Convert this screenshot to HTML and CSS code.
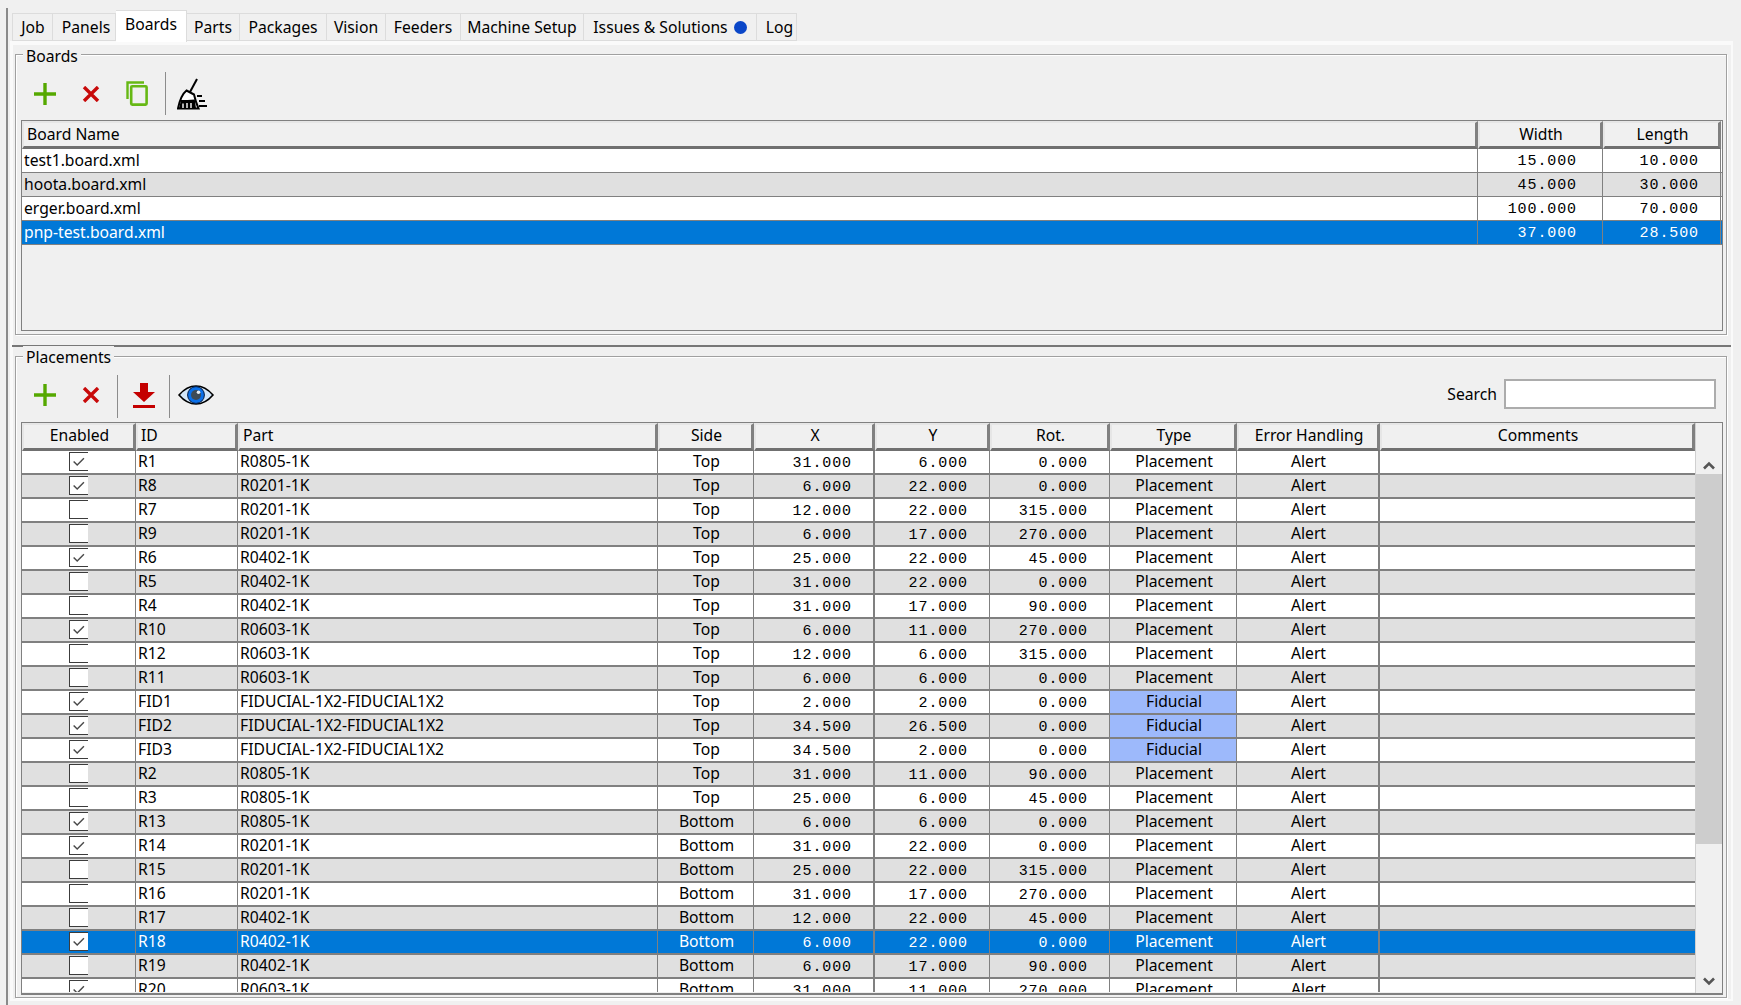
FILE: index.html
```html
<!DOCTYPE html>
<html lang="en">
<head>
<meta charset="utf-8">
<title>OpenPnP Boards</title>
<link rel="stylesheet" href="styles.css">
</head>
<body>
<svg class="defs" width="0" height="0" aria-hidden="true">
  <symbol id="chk" viewBox="0 0 19 19"><path d="M3.5 9.5 L7.5 13.5 L15 6" fill="none" stroke="#4a4a4a" stroke-width="1.6"/></symbol>
  <symbol id="plus" viewBox="0 0 22 22"><path d="M11 0V22M0 11H22" fill="none" stroke="#55a800" stroke-width="3.4"/></symbol>
  <symbol id="cross" viewBox="0 0 18 16"><path d="M2 1L16 15M16 1L2 15" fill="none" stroke="#c80a0a" stroke-width="3.4"/></symbol>
</svg>
<div class="frame">
  <nav class="tabs">
    <div class="tab">Job</div>
    <div class="tab">Panels</div>
    <div class="tab active">Boards</div>
    <div class="tab">Parts</div>
    <div class="tab">Packages</div>
    <div class="tab">Vision</div>
    <div class="tab">Feeders</div>
    <div class="tab">Machine Setup</div>
    <div class="tab">Issues &amp; Solutions <span class="dot"></span></div>
    <div class="tab">Log</div>
  </nav>
  <main class="pane">
    <section class="group group-boards">
      <div class="legend">Boards</div>
      <div class="toolbar">
        <div class="tool"><svg class="i-plus"><use href="#plus"/></svg></div>
        <div class="tool"><svg class="i-cross"><use href="#cross"/></svg></div>
        <div class="tool">
          <svg class="i-copy" viewBox="0 0 22 25"><path d="M1.5 18V1.5H18" fill="none" stroke="#66b814" stroke-width="2.4"/><rect x="5.2" y="5.2" width="15.4" height="18.4" rx="1" fill="none" stroke="#66b814" stroke-width="2.6"/></svg>
        </div>
        <div class="sep sep-copy"></div>
        <div class="tool tool-broom">
          <svg class="i-broom" viewBox="0 0 30 32"><path d="M20 1L13 14" fill="none" stroke="#000" stroke-width="2"/><path d="M9.5 12.5L17 16.5C18 21 20 27 21.5 30.5H1C2.5 23 4.5 16.5 9.5 12.5Z" fill="#fff" stroke="#000" stroke-width="2"/><path d="M4 22C8 22 13 22 17.8 21.5L19 30.5H2Z" fill="#000"/><path d="M6 30V25.5M10 30V25M14 30V25" stroke="#fff" stroke-width="1.4"/><path d="M20 18H25M22 23H28M22 28H30" stroke="#000" stroke-width="2"/></svg>
        </div>
      </div>
      <div class="table board-table">
        <div class="row head">
          <div class="cell start">Board Name</div><div class="cell center">Width</div><div class="cell center">Length</div>
        </div>
        <div class="row"><div class="cell">test1.board.xml</div><div class="cell num">15.000</div><div class="cell num">10.000</div></div>
        <div class="row alt"><div class="cell">hoota.board.xml</div><div class="cell num">45.000</div><div class="cell num">30.000</div></div>
        <div class="row"><div class="cell">erger.board.xml</div><div class="cell num">100.000</div><div class="cell num">70.000</div></div>
        <div class="row sel"><div class="cell">pnp-test.board.xml</div><div class="cell num">37.000</div><div class="cell num">28.500</div></div>
      </div>
    </section>
    <div class="splitter"></div>
    <section class="group group-placements">
      <div class="legend">Placements</div>
      <div class="toolbar toolbar-pl">
        <div class="tool"><svg class="i-plus"><use href="#plus"/></svg></div>
        <div class="tool"><svg class="i-cross"><use href="#cross"/></svg></div>
        <div class="sep sep-cross"></div>
        <div class="tool tool-dl">
          <svg class="i-dl" viewBox="0 0 22 25"><path d="M7 0H15V9H22L11 19L0 9H7Z" fill="#c40000"/><rect y="22" width="22" height="3" fill="#c40000"/></svg>
        </div>
        <div class="sep"></div>
        <div class="tool tool-eye">
          <svg class="i-eye" viewBox="0 0 36 20"><path d="M1 10C7 3 12 1 18 1C24 1 29 3 35 10C29 17 24 19 18 19C12 19 7 17 1 10Z" fill="#d3e6f8" stroke="#000" stroke-width="1.6"/><circle cx="18" cy="10" r="8.4" fill="#0a6fe8" stroke="#041a40" stroke-width="1"/><circle cx="18" cy="10" r="5" fill="#3e4b57"/><circle cx="20.5" cy="7.2" r="1.8" fill="#e8eef4"/></svg>
        </div>
        <label class="search">Search <input class="search-box" type="text"></label>
      </div>
      <div class="table pl-table">
        <div class="pl-main">
          <div class="row head">
            <div class="cell center">Enabled</div><div class="cell start">ID</div><div class="cell start">Part</div><div class="cell center">Side</div><div class="cell center">X</div><div class="cell center">Y</div><div class="cell center">Rot.</div><div class="cell center">Type</div><div class="cell center">Error Handling</div><div class="cell center">Comments</div>
          </div>
          <div class="pl-rows">
            <div class="row"><div class="cell chk"><span class="cb"><svg><use href="#chk"/></svg></span></div><div class="cell">R1</div><div class="cell">R0805-1K</div><div class="cell center">Top</div><div class="cell num">31.000</div><div class="cell num">6.000</div><div class="cell num">0.000</div><div class="cell center">Placement</div><div class="cell center">Alert</div><div class="cell"></div></div>
            <div class="row alt"><div class="cell chk"><span class="cb"><svg><use href="#chk"/></svg></span></div><div class="cell">R8</div><div class="cell">R0201-1K</div><div class="cell center">Top</div><div class="cell num">6.000</div><div class="cell num">22.000</div><div class="cell num">0.000</div><div class="cell center">Placement</div><div class="cell center">Alert</div><div class="cell"></div></div>
            <div class="row"><div class="cell chk"><span class="cb"></span></div><div class="cell">R7</div><div class="cell">R0201-1K</div><div class="cell center">Top</div><div class="cell num">12.000</div><div class="cell num">22.000</div><div class="cell num">315.000</div><div class="cell center">Placement</div><div class="cell center">Alert</div><div class="cell"></div></div>
            <div class="row alt"><div class="cell chk"><span class="cb"></span></div><div class="cell">R9</div><div class="cell">R0201-1K</div><div class="cell center">Top</div><div class="cell num">6.000</div><div class="cell num">17.000</div><div class="cell num">270.000</div><div class="cell center">Placement</div><div class="cell center">Alert</div><div class="cell"></div></div>
            <div class="row"><div class="cell chk"><span class="cb"><svg><use href="#chk"/></svg></span></div><div class="cell">R6</div><div class="cell">R0402-1K</div><div class="cell center">Top</div><div class="cell num">25.000</div><div class="cell num">22.000</div><div class="cell num">45.000</div><div class="cell center">Placement</div><div class="cell center">Alert</div><div class="cell"></div></div>
            <div class="row alt"><div class="cell chk"><span class="cb"></span></div><div class="cell">R5</div><div class="cell">R0402-1K</div><div class="cell center">Top</div><div class="cell num">31.000</div><div class="cell num">22.000</div><div class="cell num">0.000</div><div class="cell center">Placement</div><div class="cell center">Alert</div><div class="cell"></div></div>
            <div class="row"><div class="cell chk"><span class="cb"></span></div><div class="cell">R4</div><div class="cell">R0402-1K</div><div class="cell center">Top</div><div class="cell num">31.000</div><div class="cell num">17.000</div><div class="cell num">90.000</div><div class="cell center">Placement</div><div class="cell center">Alert</div><div class="cell"></div></div>
            <div class="row alt"><div class="cell chk"><span class="cb"><svg><use href="#chk"/></svg></span></div><div class="cell">R10</div><div class="cell">R0603-1K</div><div class="cell center">Top</div><div class="cell num">6.000</div><div class="cell num">11.000</div><div class="cell num">270.000</div><div class="cell center">Placement</div><div class="cell center">Alert</div><div class="cell"></div></div>
            <div class="row"><div class="cell chk"><span class="cb"></span></div><div class="cell">R12</div><div class="cell">R0603-1K</div><div class="cell center">Top</div><div class="cell num">12.000</div><div class="cell num">6.000</div><div class="cell num">315.000</div><div class="cell center">Placement</div><div class="cell center">Alert</div><div class="cell"></div></div>
            <div class="row alt"><div class="cell chk"><span class="cb"></span></div><div class="cell">R11</div><div class="cell">R0603-1K</div><div class="cell center">Top</div><div class="cell num">6.000</div><div class="cell num">6.000</div><div class="cell num">0.000</div><div class="cell center">Placement</div><div class="cell center">Alert</div><div class="cell"></div></div>
            <div class="row"><div class="cell chk"><span class="cb"><svg><use href="#chk"/></svg></span></div><div class="cell">FID1</div><div class="cell">FIDUCIAL-1X2-FIDUCIAL1X2</div><div class="cell center">Top</div><div class="cell num">2.000</div><div class="cell num">2.000</div><div class="cell num">0.000</div><div class="cell center fid">Fiducial</div><div class="cell center">Alert</div><div class="cell"></div></div>
            <div class="row alt"><div class="cell chk"><span class="cb"><svg><use href="#chk"/></svg></span></div><div class="cell">FID2</div><div class="cell">FIDUCIAL-1X2-FIDUCIAL1X2</div><div class="cell center">Top</div><div class="cell num">34.500</div><div class="cell num">26.500</div><div class="cell num">0.000</div><div class="cell center fid">Fiducial</div><div class="cell center">Alert</div><div class="cell"></div></div>
            <div class="row"><div class="cell chk"><span class="cb"><svg><use href="#chk"/></svg></span></div><div class="cell">FID3</div><div class="cell">FIDUCIAL-1X2-FIDUCIAL1X2</div><div class="cell center">Top</div><div class="cell num">34.500</div><div class="cell num">2.000</div><div class="cell num">0.000</div><div class="cell center fid">Fiducial</div><div class="cell center">Alert</div><div class="cell"></div></div>
            <div class="row alt"><div class="cell chk"><span class="cb"></span></div><div class="cell">R2</div><div class="cell">R0805-1K</div><div class="cell center">Top</div><div class="cell num">31.000</div><div class="cell num">11.000</div><div class="cell num">90.000</div><div class="cell center">Placement</div><div class="cell center">Alert</div><div class="cell"></div></div>
            <div class="row"><div class="cell chk"><span class="cb"></span></div><div class="cell">R3</div><div class="cell">R0805-1K</div><div class="cell center">Top</div><div class="cell num">25.000</div><div class="cell num">6.000</div><div class="cell num">45.000</div><div class="cell center">Placement</div><div class="cell center">Alert</div><div class="cell"></div></div>
            <div class="row alt"><div class="cell chk"><span class="cb"><svg><use href="#chk"/></svg></span></div><div class="cell">R13</div><div class="cell">R0805-1K</div><div class="cell center">Bottom</div><div class="cell num">6.000</div><div class="cell num">6.000</div><div class="cell num">0.000</div><div class="cell center">Placement</div><div class="cell center">Alert</div><div class="cell"></div></div>
            <div class="row"><div class="cell chk"><span class="cb"><svg><use href="#chk"/></svg></span></div><div class="cell">R14</div><div class="cell">R0201-1K</div><div class="cell center">Bottom</div><div class="cell num">31.000</div><div class="cell num">22.000</div><div class="cell num">0.000</div><div class="cell center">Placement</div><div class="cell center">Alert</div><div class="cell"></div></div>
            <div class="row alt"><div class="cell chk"><span class="cb"></span></div><div class="cell">R15</div><div class="cell">R0201-1K</div><div class="cell center">Bottom</div><div class="cell num">25.000</div><div class="cell num">22.000</div><div class="cell num">315.000</div><div class="cell center">Placement</div><div class="cell center">Alert</div><div class="cell"></div></div>
            <div class="row"><div class="cell chk"><span class="cb"></span></div><div class="cell">R16</div><div class="cell">R0201-1K</div><div class="cell center">Bottom</div><div class="cell num">31.000</div><div class="cell num">17.000</div><div class="cell num">270.000</div><div class="cell center">Placement</div><div class="cell center">Alert</div><div class="cell"></div></div>
            <div class="row alt"><div class="cell chk"><span class="cb"></span></div><div class="cell">R17</div><div class="cell">R0402-1K</div><div class="cell center">Bottom</div><div class="cell num">12.000</div><div class="cell num">22.000</div><div class="cell num">45.000</div><div class="cell center">Placement</div><div class="cell center">Alert</div><div class="cell"></div></div>
            <div class="row sel"><div class="cell chk"><span class="cb"><svg><use href="#chk"/></svg></span></div><div class="cell">R18</div><div class="cell">R0402-1K</div><div class="cell center">Bottom</div><div class="cell num">6.000</div><div class="cell num">22.000</div><div class="cell num">0.000</div><div class="cell center">Placement</div><div class="cell center">Alert</div><div class="cell"></div></div>
            <div class="row alt"><div class="cell chk"><span class="cb"></span></div><div class="cell">R19</div><div class="cell">R0402-1K</div><div class="cell center">Bottom</div><div class="cell num">6.000</div><div class="cell num">17.000</div><div class="cell num">90.000</div><div class="cell center">Placement</div><div class="cell center">Alert</div><div class="cell"></div></div>
            <div class="row"><div class="cell chk"><span class="cb"><svg><use href="#chk"/></svg></span></div><div class="cell">R20</div><div class="cell">R0603-1K</div><div class="cell center">Bottom</div><div class="cell num">31.000</div><div class="cell num">11.000</div><div class="cell num">270.000</div><div class="cell center">Placement</div><div class="cell center">Alert</div><div class="cell"></div></div>
          </div>
        </div>
        <div class="scrollbar">
          <svg class="arrow" viewBox="0 0 12 9"><path d="M1 7.5L6 2.5L11 7.5" fill="none" stroke="#555" stroke-width="2.6"/></svg>
          <div class="thumb"></div>
          <svg class="arrow arrow-down" viewBox="0 0 12 9"><path d="M1 1.5L6 6.5L11 1.5" fill="none" stroke="#555" stroke-width="2.6"/></svg>
        </div>
      </div>
    </section>
  </main>
</div>
</body>
</html>
```

FILE: styles.css
```css
* { box-sizing: border-box; }
html, body { margin: 0; height: 100%; overflow: hidden; }
body {
  background: #f0f0f0;
  color: #000;
  font-family: "Noto Sans", "Liberation Sans", sans-serif;
  font-size: 15.7px;
  line-height: 20px;
}
.defs { position: absolute; }

.frame {
  margin: 8px 0 0 6px;
  height: 997px;
  border-left: 2px solid #8a8a8a;
}
.tabs {
  display: grid;
  grid-template-columns: 41px 63px 71px 53px 87px 59px 75px 123px 173px 40px;
  align-items: end;
  height: 34px;
  margin-left: 4px;
  padding-top: 2px;
  position: relative;
  z-index: 1;
}
.tab {
  height: 28px;
  margin-bottom: 1px;
  border: 1px solid #dcdcdc;
  border-left: 0;
  background: #f0f0f0;
  text-align: center;
  line-height: 27px;
  white-space: nowrap;
}
.tab:first-child { border-left: 1px solid #dcdcdc; padding-left: 1px; }
.tab:nth-child(2) { padding-left: 4px; }
.tab:last-child { padding-left: 6px; }
.tab.active {
  height: 32px;
  margin-bottom: 0;
  background: #fff;
  border-bottom: 0;
  line-height: 26px;
}
.dot {
  display: inline-block;
  width: 13px;
  height: 13px;
  margin-left: 2px;
  border-radius: 50%;
  background: #0a46c8;
  vertical-align: -1px;
}

.pane {
  width: 1723px;
  height: 960px;
  margin: -1px 0 0 2px;
  border-style: solid;
  border-color: #fafafa;
  border-width: 4px 2px 2px 3px;
  padding: 9px 4px 0 2px;
}
.group {
  position: relative;
  border: 1px solid #a0a0a0;
  box-shadow: 1px 1px 0 #fff, inset 1px 1px 0 #fff;
  padding-left: 5px;
}
.group-boards { height: 281px; }
.group-placements { height: 642px; }
.legend {
  position: absolute;
  top: -10px;
  left: 7px;
  padding: 0 3px;
  background: #f0f0f0;
  height: 22px;
  line-height: 22px;
}
.group-placements .legend { top: -11px; }
.splitter {
  height: 2px;
  margin: 10px -4px 9px -3px;
  background: #777;
}

.toolbar {
  display: flex;
  align-items: center;
  height: 65px;
  padding: 12px 0 0 1px;
}
.toolbar-pl { padding-top: 11px; }
.tool {
  width: 46px;
  display: flex;
  align-items: center;
  justify-content: center;
}
.sep {
  width: 1px;
  height: 43px;
  background: #8c8c8c;
}
.toolbar-pl .sep { margin-top: 3px; }
.sep-copy { margin-left: 5px; }
.sep-cross { margin-left: 3px; }
.tool-broom { width: 50px; margin-left: 1px; }
.tool-dl { width: 51px; }
.tool-eye { width: 51px; }
.i-plus { width: 22px; height: 22px; }
.i-cross { width: 18px; height: 16px; }
.i-copy { width: 22px; height: 25px; }
.i-broom { width: 30px; height: 32px; }
.i-dl { width: 22px; height: 25px; }
.i-eye { width: 36px; height: 20px; }
.search {
  margin-left: auto;
  margin-right: 10px;
  margin-top: -3px;
  display: flex;
  align-items: center;
  gap: 7px;
}
.search-box {
  width: 212px;
  height: 30px;
  border: 2px solid #acacac;
  background: #fff;
  border-radius: 0;
  padding: 0 3px;
}

.table {
  width: 1702px;
  border: 1px solid #808080;
  background: #f0f0f0;
}
.board-table { height: 211px; }
.board-table .row { grid-template-columns: 1456px 125px 118px; }
.board-table .cell { line-height: 23px; }
.board-table .num { line-height: 25px; }
.board-table .num:nth-child(2) { padding-right: 25px; }
.pl-table { display: flex; height: 573px; border-bottom-width: 2px; }
.pl-main { width: 1673px; }
.pl-main .row { grid-template-columns: 114px 102px 420px 96px 121px 115px 120px 127px 143px 315px; }
.pl-rows { height: 541px; overflow: hidden; }

.row {
  display: grid;
  height: 24px;
  background: #fff;
  border-bottom: 1px solid #808080;
}
.pl-rows .row { border-bottom-width: 2px; }
.row.alt { background: #e0e0e0; }
.row.sel { background: #0078d7; color: #fff; }
.cell {
  padding: 0 2px;
  border-right: 1px solid #808080;
  line-height: 21px;
  white-space: nowrap;
  overflow: hidden;
}
.pl-rows .cell:nth-child(5), .pl-rows .cell:nth-child(9) { border-right-width: 2px; }
.pl-rows .cell:last-child { border-right: 0; }
.center { text-align: center; padding-left: 4px; }
.num {
  text-align: right;
  padding-right: 21px;
  font-family: "Liberation Mono", monospace;
  font-size: 15px;
  letter-spacing: 0.9px;
  line-height: 25px;
}
.fid { background: #9db9fb; color: #000; }
.chk { display: flex; justify-content: center; align-items: center; padding: 0 0 2px; }
.cb {
  display: block;
  width: 19px;
  height: 19px;
  background: #fff;
  border: 1px solid #3c3c3c;
  border-right: 0;
}
.cb svg { display: block; width: 18px; height: 17px; }

.head {
  height: 28px;
  background: #f0f0f0;
  border-bottom: 0;
}
.head .cell {
  border-style: solid;
  border-width: 2px 3px 3px 2px;
  border-color: #e6e6e6 #808080 #707070 #e6e6e6;
  line-height: 21px;
}
.board-table .head .cell { line-height: 23px; }
.head .start { padding-left: 3px; }

.scrollbar {
  flex: 1;
  display: flex;
  flex-direction: column;
  align-items: center;
  padding-top: 38px;
  border-left: 1px solid #d0d0d0;
}
.arrow { width: 12px; height: 9px; margin-bottom: 4px; }
.thumb { width: 100%; height: 370px; background: #cdcdcd; }
.arrow-down { margin: auto 0 7px; }
```
